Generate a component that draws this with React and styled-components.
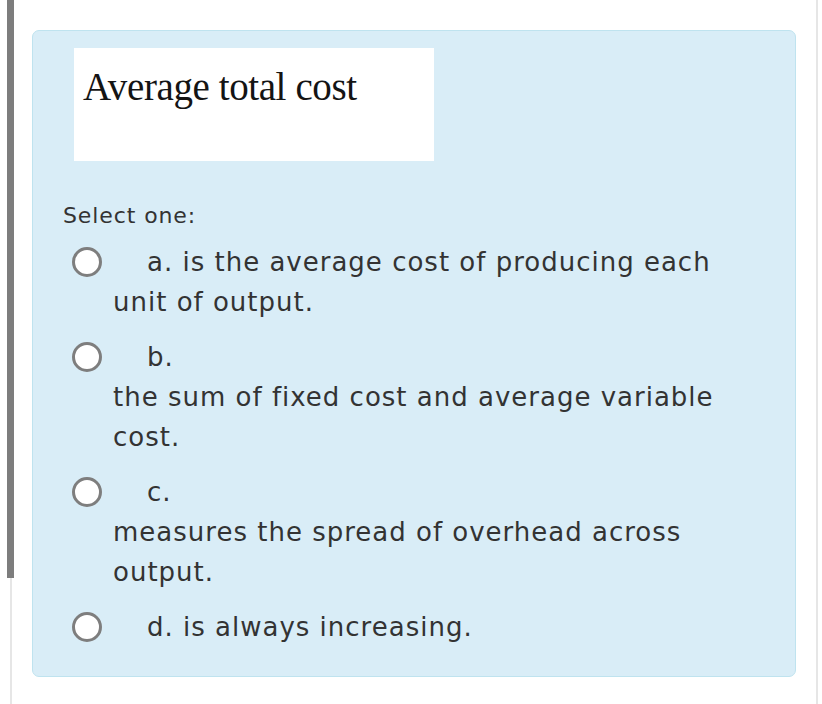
import styled, { createGlobalStyle } from 'styled-components';

const GlobalStyle = createGlobalStyle`
  html, body {
    margin: 0;
    padding: 0;
    background: #ffffff;
  }
  body {
    font-family: "DejaVu Sans", Verdana, sans-serif;
    color: #333333;
  }
`;

const options = [
  { letter: 'a.', text: 'is the average cost of producing each unit of output.', block: false },
  { letter: 'b.', text: 'the sum of fixed cost and average variable cost.', block: true },
  { letter: 'c.', text: 'measures the spread of overhead across output.', block: true },
  { letter: 'd.', text: 'is always increasing.', block: false }
];

const App = () => {
  return (
    <>
      <GlobalStyle />
      <Frame>
        <ScrollThumb />
        <Panel>
          <QuestionImage>
            <QuestionText>Average total cost</QuestionText>
          </QuestionImage>
          <Prompt>Select one:</Prompt>
          <AnswerList>
            {options.map((opt) => (
              <Answer key={opt.letter}>
                <Radio />
                {opt.block ? (
                  <>
                    {opt.letter}
                    <AnswerBody>{opt.text}</AnswerBody>
                  </>
                ) : (
                  `${opt.letter} ${opt.text}`
                )}
              </Answer>
            ))}
          </AnswerList>
        </Panel>
      </Frame>
    </>
  );
};

const Frame = styled.div`
  position: relative;
  box-sizing: border-box;
  margin-left: 10px;
  width: 808px;
  height: 704px;
  padding-top: 30px;
  border-left: 2px solid #e6e6e6;
  border-right: 2px solid #e6e6e6;
`;

const ScrollThumb = styled.div`
  position: absolute;
  left: -5px;
  top: 0;
  width: 7px;
  height: 578px;
  background: #7d7d7d;
`;

const Panel = styled.div`
  box-sizing: border-box;
  margin-left: 20px;
  width: 764px;
  height: 647px;
  padding: 17px 30px 0 30px;
  background: #d9edf7;
  border: 1px solid #bfe3ef;
  border-radius: 7px;
`;

const QuestionImage = styled.div`
  box-sizing: border-box;
  margin-left: 11px;
  width: 360px;
  height: 113px;
  padding: 19px 0 0 9px;
  background: #ffffff;
`;

const QuestionText = styled.div`
  font-family: "Liberation Serif", "Times New Roman", serif;
  font-size: 39px;
  line-height: 40px;
  letter-spacing: -0.4px;
  color: #141414;
`;

const Prompt = styled.div`
  margin-top: 40px;
  font-size: 22px;
  line-height: 30px;
  letter-spacing: 0.9px;
  color: #333333;
`;

const AnswerList = styled.div`
  margin-top: 11px;
`;

const Answer = styled.div`
  padding-left: 50px;
  margin-bottom: 15px;
  font-size: 26px;
  line-height: 40px;
  letter-spacing: 1px;
  color: #333333;
`;

const Radio = styled.span`
  display: inline-block;
  box-sizing: border-box;
  width: 30px;
  height: 30px;
  margin-left: -41px;
  margin-right: 45px;
  vertical-align: middle;
  position: relative;
  top: -2px;
  border: 3px solid #7e7e7e;
  border-radius: 50%;
  background: #ffffff;
`;

const AnswerBody = styled.div`
  margin-left: 0;
`;

export default App;
